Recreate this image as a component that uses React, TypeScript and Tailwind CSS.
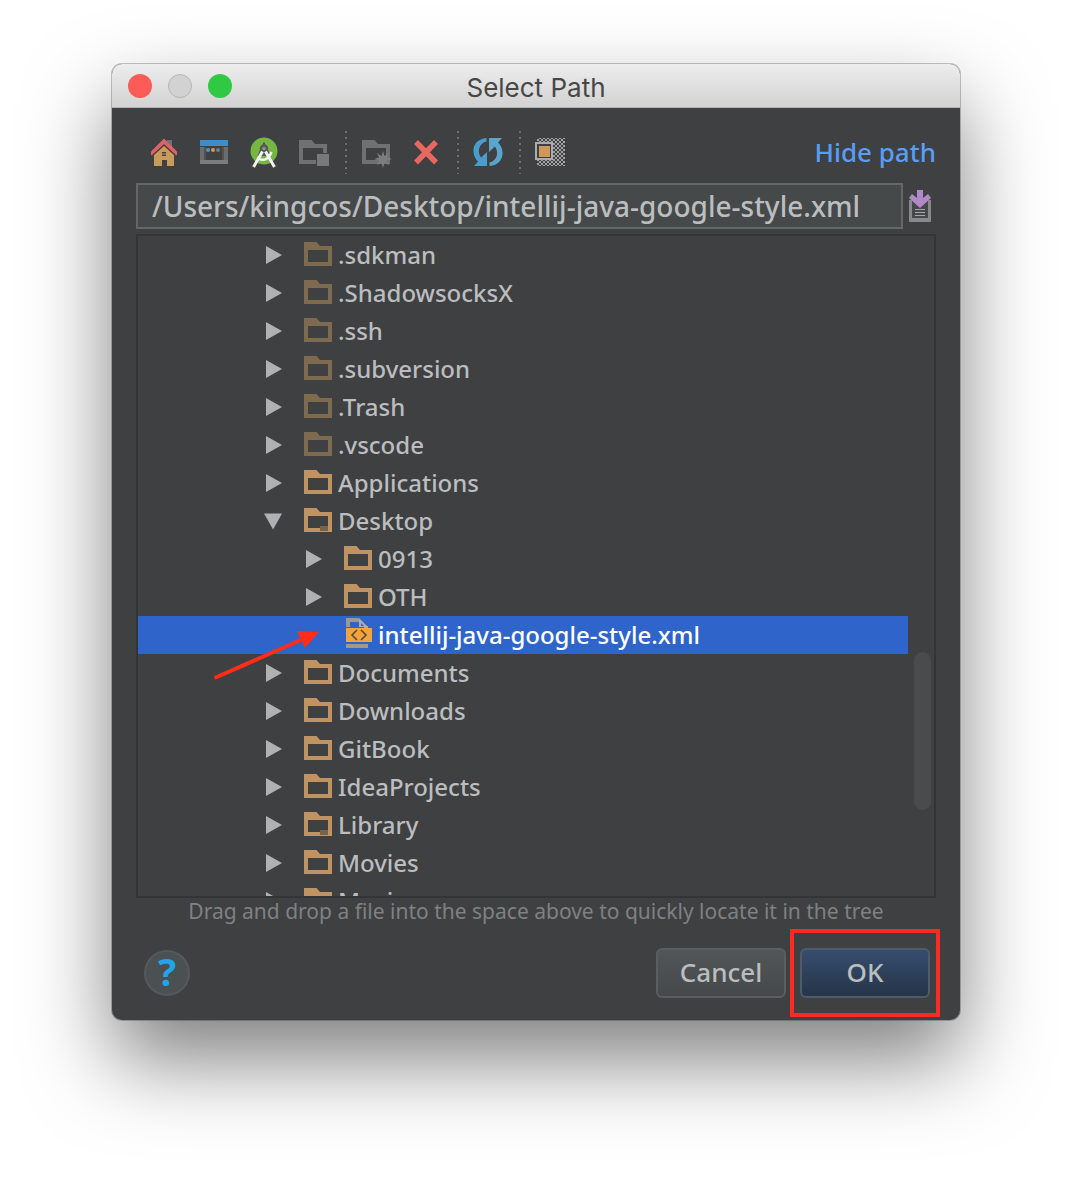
import { useState } from "react";
import type { ReactNode } from "react";

type Node = {
  name: string;
  kind: "hidden" | "folder" | "linked" | "file";
  level: 1 | 2;
  open?: boolean;
};

const nodes: Node[] = [
  { name: ".sdkman", kind: "hidden", level: 1 },
  { name: ".ShadowsocksX", kind: "hidden", level: 1 },
  { name: ".ssh", kind: "hidden", level: 1 },
  { name: ".subversion", kind: "hidden", level: 1 },
  { name: ".Trash", kind: "hidden", level: 1 },
  { name: ".vscode", kind: "hidden", level: 1 },
  { name: "Applications", kind: "folder", level: 1 },
  { name: "Desktop", kind: "linked", level: 1, open: true },
  { name: "0913", kind: "folder", level: 2 },
  { name: "OTH", kind: "folder", level: 2 },
  { name: "intellij-java-google-style.xml", kind: "file", level: 2 },
  { name: "Documents", kind: "folder", level: 1 },
  { name: "Downloads", kind: "folder", level: 1 },
  { name: "GitBook", kind: "folder", level: 1 },
  { name: "IdeaProjects", kind: "folder", level: 1 },
  { name: "Library", kind: "linked", level: 1 },
  { name: "Movies", kind: "folder", level: 1 },
  { name: "Music", kind: "folder", level: 1 },
];

const FOLDER = "M0 0H12.5L16 4H28V24H0ZM4 8V20H24V8Z";

function HomeIcon() {
  return (
    <svg width="30" height="30" viewBox="0 0 30 30">
      <path d="M18 3h5v8l-5-5z" fill="#6f7173" />
      <path d="M5 17.500L15 8.500l10 9V29h-7v-6h-5v6H5z" fill="#c89a5b" />
      <path d="M13 15h4v4h-4z" fill="#45413c" />
      <path d="M13 17h4" stroke="#c89a5b" strokeWidth="1" />
      <path d="M15 1.500L2 14.500V18l1.500.5L15 8l11.500 10.500L28 18v-3.500z" fill="#d9656a" />
      <path d="M3.500 18.500L15 8l11.500 10.500" stroke="#5a3a38" strokeWidth="1.500" fill="none" />
    </svg>
  );
}

function ProjectIcon() {
  return (
    <svg width="30" height="30" viewBox="0 0 30 30">
      <path d="M1 3h28v6H1z" fill="#3f8cc6" />
      <path d="M1 10h4v13H1zM25 10h4v13h-4z" fill="#6a6c6e" />
      <path d="M5 10h2v13H5zM23 10h2v13h-2z" fill="#505254" />
      <path d="M1 23h28v4H1z" fill="#7b7d7f" />
      <circle cx="9" cy="13" r="2" fill="#4a95d0" />
      <circle cx="14" cy="13" r="2" fill="#c9995f" />
      <circle cx="19" cy="13" r="2" fill="#72807c" />
    </svg>
  );
}

function AndroidStudioIcon() {
  return (
    <svg width="30" height="32" viewBox="0 0 30 32">
      <circle cx="15" cy="15" r="13.500" fill="#76b643" />
      <path d="M15 6.500v4M11.500 15h7l1.500 4h-10z" fill="#54595b" stroke="#54595b" strokeWidth="2" />
      <circle cx="15" cy="12.500" r="3" fill="#8a9a80" stroke="#54595b" strokeWidth="2.500" />
      <path d="M13.500 15.500L4.500 31M16.500 15.500L25.500 31" stroke="#f4f4f4" strokeWidth="3" />
      <path d="M8.500 22c5 3.500 11 2 14-6" stroke="#f4f4f4" strokeWidth="2.500" fill="none" />
    </svg>
  );
}

function ModuleIcon() {
  return (
    <svg width="30" height="30" viewBox="0 -3 30 30">
      <path d={FOLDER} fill="#6f7173" fillRule="evenodd" />
      <path d="M17 13h13v13H17z" fill="#3e4042" />
      <path d="M18 14h12v12H18z" fill="#77797b" />
    </svg>
  );
}

function NewFolderIcon() {
  return (
    <svg width="32" height="32" viewBox="-2 -4 32 32">
      <path d={FOLDER} fill="#6f7173" fillRule="evenodd" />
      <path
        d="M21 11l1.500 5 4.500-3-2 4.500 5 1.500-5 1.500 2 4.500-4.500-2-1.500 5-1.500-5-4.500 2 2-4.500-5-1.500 5-1.500-2-4.500 4.500 3z"
        fill="#7b7d7f"
      />
    </svg>
  );
}

function DeleteIcon() {
  return (
    <svg width="26" height="26" viewBox="0 0 26 26">
      <path d="M3 3L23 23.500M23 3L3 23.500" stroke="#e8675f" strokeWidth="5.500" />
    </svg>
  );
}

function RefreshIcon() {
  return (
    <svg width="30" height="30" viewBox="0 0 30 30">
      <path d="M13.500 1C4 2 0 8 .5 15c.2 4 2 7 4.500 9.500L1 29h13V15l-6 5.500C3.500 14 6.500 6 13.500 4.500z" fill="#4a9ccb" />
      <path d="M16.500 29c9.500-1 13.500-7 13-14-.2-4-2-7-4.500-9.500L29 1H16v14l6-5.500c4.500 6.500 1.500 14.500-5.500 16z" fill="#5ba5cc" />
    </svg>
  );
}

function ShowHiddenIcon() {
  return (
    <svg width="30" height="30" viewBox="0 0 30 30">
      <defs>
        <pattern id="checks" width="4" height="4" patternUnits="userSpaceOnUse">
          <path d="M0 0h2v2H0zM2 2h2v2H2z" fill="#a2a4a5" />
        </pattern>
      </defs>
      <path d="M2 1h28v28H2z" fill="url(#checks)" />
      <path d="M0 5h18v18H0z" fill="#a9abac" />
      <path d="M2 7h14v14H2z" fill="#3e4042" />
      <path d="M4 9h11v11H4z" fill="#cf975a" />
    </svg>
  );
}

function HistoryIcon() {
  return (
    <svg width="24" height="34" viewBox="0 0 24 34">
      <path d="M1 11h22v22H1z" fill="#87898b" />
      <path d="M4 10h16v19H4z" fill="#45474a" />
      <path d="M7 20.500h10M7 23.500h10M7 26.500h10" stroke="#a4a6a7" />
      <path d="M9 1h6v8l5-4 3 4-11 10L1 9l3-4 5 4z" fill="#b288c9" />
    </svg>
  );
}

function FolderIcon({ kind }: { kind: Node["kind"] }) {
  return (
    <svg width="28" height="26" viewBox="0 0 28 26" className="shrink-0">
      <path d={FOLDER} fill={kind === "hidden" ? "#7d6a4f" : "#bf9462"} fillRule="evenodd" />
      {kind === "linked" && <path d="M16 18h8v5h-8z" fill="#766348" />}
    </svg>
  );
}

function XmlIcon() {
  return (
    <svg width="28" height="34" viewBox="0 0 28 34" className="shrink-0">
      <path d="M2 0h13v4H6v5H2zM2 26h22v4H2z" fill="#9c9a8f" />
      <path d="M15 0l9 9h-9zM20 8h4v2h-4z" fill="#a9aeb5" />
      <path d="M17 5l3 3h-3z" fill="#2f65ca" />
      <path d="M2 10h26v14H2z" fill="#efa53f" />
      <path d="M13 12l-5 5 5 5M17 12l5 5-5 5" stroke="#57452c" strokeWidth="1.500" fill="none" />
    </svg>
  );
}

function Twisty({ open }: { open?: boolean }) {
  return (
    <svg width="20" height="20" viewBox="0 0 20 20" className="shrink-0">
      <path d={open ? "M0 2.500h18L9 18.500z" : "M2 1v18l16-9z"} fill="#afb1b3" />
    </svg>
  );
}

function ToolButton({ label, children, disabled }: { label: string; children: ReactNode; disabled?: boolean }) {
  return (
    <button type="button" aria-label={label} disabled={disabled} className="flex h-11 w-[50px] items-center justify-center">
      {children}
    </button>
  );
}

function Separator() {
  return (
    <svg width="12" height="44" viewBox="0 0 12 44" className="shrink-0">
      <path d="M7 1v43" stroke="#6c6e70" strokeWidth="2" strokeDasharray="2 4" />
    </svg>
  );
}

export default function App() {
  const [path, setPath] = useState("/Users/kingcos/Desktop/intellij-java-google-style.xml");
  const [selected, setSelected] = useState("intellij-java-google-style.xml");

  return (
    <div className="min-h-screen bg-white px-28 py-16 font-['Noto_Sans',sans-serif] font-medium text-[#bbbdbf]">
      <main className="overflow-clip rounded-[10px] bg-[#3e4042] shadow-[0_0_0_1px_rgba(0,0,0,0.22),0_40px_84px_rgba(0,0,0,0.5)]">
        {/* Title bar */}
        <header className="grid h-11 grid-cols-[1fr_auto_1fr] items-center border-b border-[#b4b4b4] bg-linear-to-b from-[#ededed] to-[#d2d2d2] px-4">
          <div className="flex gap-4">
            <button type="button" aria-label="Close" className="size-6 rounded-full bg-[#fc5b57]" />
            <button type="button" aria-label="Minimize" className="size-6 rounded-full border border-[#b5b5b5] bg-[#d2d2d2]" />
            <button type="button" aria-label="Zoom" className="size-6 rounded-full bg-[#2fc944]" />
          </div>
          <h1 className="pt-1 font-['Inter',sans-serif] text-[26px] leading-9 font-normal text-[#474747]">Select Path</h1>
        </header>

        <div className="px-6 pt-[22px] pb-[22px]">
          {/* Toolbar */}
          <div className="flex items-center justify-between pl-[3px]">
            <div className="flex items-center">
              <ToolButton label="Home"><HomeIcon /></ToolButton>
              <ToolButton label="Project directory"><ProjectIcon /></ToolButton>
              <ToolButton label="Android Studio directory"><AndroidStudioIcon /></ToolButton>
              <ToolButton label="Module directory" disabled><ModuleIcon /></ToolButton>
              <Separator />
              <ToolButton label="New folder" disabled><NewFolderIcon /></ToolButton>
              <ToolButton label="Delete"><DeleteIcon /></ToolButton>
              <Separator />
              <ToolButton label="Refresh"><RefreshIcon /></ToolButton>
              <Separator />
              <ToolButton label="Show hidden files"><ShowHiddenIcon /></ToolButton>
            </div>
            <a href="#path" className="text-[26px] text-[#589df6]">Hide path</a>
          </div>

          {/* Path field */}
          <div className="mt-[9px] flex items-center gap-[5px]">
            <input
              id="path"
              aria-label="Path"
              value={path}
              onChange={(e) => setPath(e.target.value)}
              className="h-[46px] min-w-0 flex-1 border-2 border-[#646667] bg-[#45494a] px-3.5 text-[28px] outline-none"
            />
            <button type="button" aria-label="Recent paths" className="mr-1">
              <HistoryIcon />
            </button>
          </div>

          {/* File tree */}
          <div className="relative mt-[5px] h-[664px] overflow-hidden border-2 border-[#323435]">
            <ul role="tree" aria-label="Files" className="pr-[26px]">
              {nodes.map((n) => (
                <li
                  key={n.name}
                  role="treeitem"
                  aria-level={n.level}
                  aria-selected={n.name === selected}
                  onClick={() => setSelected(n.name)}
                  className={`flex h-[38px] items-center text-2xl ${n.level === 1 ? "pl-[126px]" : "pl-[166px]"} ${
                    n.name === selected ? "bg-[#2f65ca] text-white" : ""
                  }`}
                >
                  {n.kind !== "file" && (
                    <span className="mr-5 flex">
                      <Twisty open={n.open} />
                    </span>
                  )}
                  <span className={`mr-1.5 flex ${n.kind === "file" ? "ml-10" : ""}`}>
                    {n.kind === "file" ? <XmlIcon /> : <FolderIcon kind={n.kind} />}
                  </span>
                  {n.name}
                </li>
              ))}
            </ul>
            <div className="absolute top-[416px] right-[3px] h-[158px] w-[17px] rounded-full bg-[#4a4b4d]" />
            {/* Pointer to the selected file */}
            <svg width="106" height="52" viewBox="0 0 106 52" className="absolute top-[392px] left-[75px]">
              <path d="M1.500 50L90 11" stroke="#ff2d1a" strokeWidth="4" />
              <path d="M106 4L84 3l8 17z" fill="#ff2d1a" />
            </svg>
          </div>

          <p className="text-center text-[21px] leading-[26px] font-normal text-[#7f8183]">
            Drag and drop a file into the space above to quickly locate it in the tree
          </p>

          {/* Actions */}
          <footer className="mt-6 flex items-center justify-between pr-1.5 pl-2">
            <button
              type="button"
              aria-label="Help"
              className="size-[46px] rounded-full border-2 border-[#56595b] bg-[#4b5052] pb-1 text-[38px] leading-none font-bold text-[#22a5e8]"
            >
              ?
            </button>
            <div className="flex gap-3.5">
              <button
                type="button"
                className="h-[50px] w-[130px] rounded-md border-2 border-[#5b5e60] bg-linear-to-b from-[#525658] to-[#45494b] pb-0.5 text-[26px] leading-none"
              >
                Cancel
              </button>
              <div className="relative">
                <button
                  type="button"
                  className="h-[50px] w-[130px] rounded-md border-2 border-[#4e5b69] bg-linear-to-b from-[#364d6e] to-[#263549] pb-0.5 text-[26px] leading-none"
                >
                  OK
                </button>
                <div className="pointer-events-none absolute -inset-x-2.5 -inset-y-[19px] border-4 border-[#fb2b23]" />
              </div>
            </div>
          </footer>
        </div>
      </main>
    </div>
  );
}
